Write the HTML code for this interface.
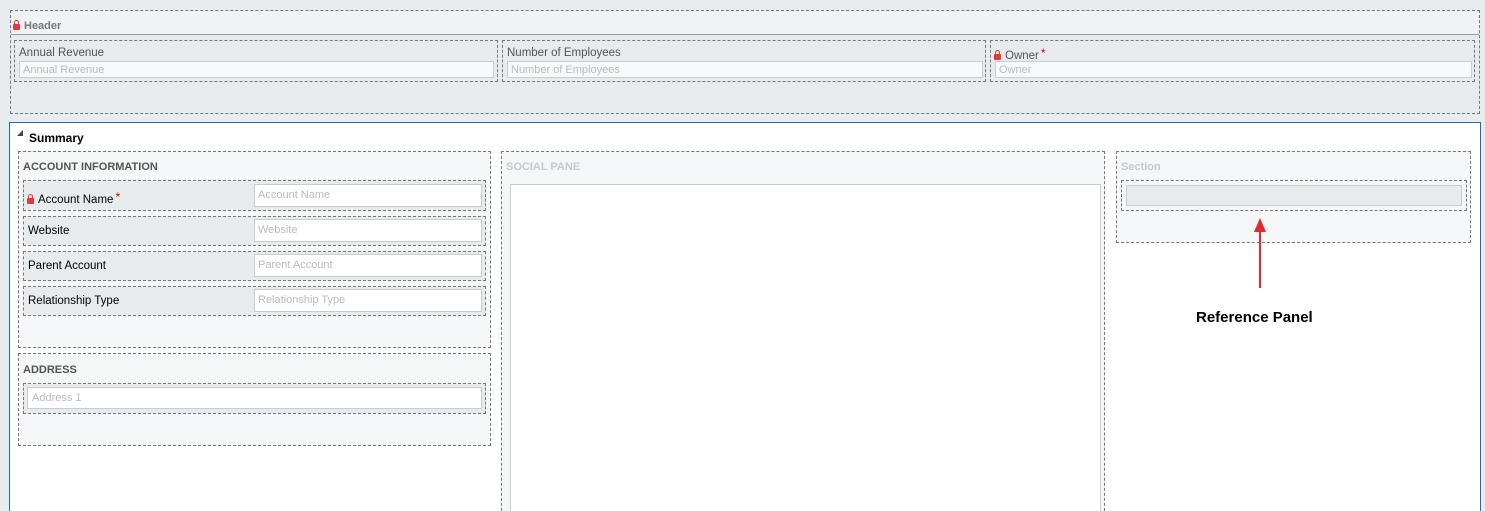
<!DOCTYPE html>
<html style="height:511px;overflow:hidden"><head><style>
*{box-sizing:border-box;margin:0;padding:0}
body{width:1485px;height:511px;overflow:hidden;background:#e9ecef;font-family:"Liberation Sans",sans-serif;font-size:11.5px;color:#333;position:relative}
.a{position:absolute}
.d{position:absolute;border:1px dashed #777}
.in{position:absolute;border:1px solid #ccc;background:#fff;color:#bbb;font-size:11px;padding:3px 3px;line-height:14px}
.lock{display:inline-block;width:7px;height:6px;background:#e8363d;border-radius:1px;position:relative;margin-right:4px;vertical-align:-1px}
.lock:before{content:"";position:absolute;left:1px;top:-4px;width:3px;height:4px;border:1px solid #e8363d;border-bottom:none;border-radius:3px 3px 0 0}
.t{position:absolute;font-size:11px;font-weight:bold;color:#555}
.star{color:#c00;font-size:12px;vertical-align:2px;margin-left:2px}
</style></head><body>
<div class="d" style="left:10px;top:10px;width:1470px;height:104px;background:#e8ebee"></div>
<div class="a" style="left:11px;top:11px;width:1468px;height:24px;background:#f0f2f5;border-bottom:1px solid #999"></div>
<div class="a" style="left:13px;top:20px;color:#777;font-weight:bold;font-size:11px"><span class="lock"></span>Header</div>

<div class="d" style="left:14px;top:40px;width:484px;height:42px"></div>
<div class="a" style="left:19px;top:47px;color:#555">Annual Revenue</div>
<div class="in" style="left:19px;top:61px;width:475px;height:17px;background:#f7f8fa;padding-top:1px">Annual Revenue</div>
<div class="d" style="left:502px;top:40px;width:484px;height:42px"></div>
<div class="a" style="left:507px;top:47px;color:#555">Number of Employees</div>
<div class="in" style="left:507px;top:61px;width:476px;height:17px;background:#f7f8fa;padding-top:1px">Number of Employees</div>
<div class="d" style="left:990px;top:40px;width:485px;height:42px"></div>
<div class="a" style="left:994px;top:46px;color:#555"><span class="lock"></span>Owner<span class="star">*</span></div>
<div class="in" style="left:995px;top:61px;width:477px;height:17px;background:#f7f8fa;padding-top:1px">Owner</div>

<div class="a" style="left:9px;top:122px;width:1472px;height:395px;background:#fff;border:1px solid #1e6ea8"></div>
<div class="a" style="left:17px;top:130px;width:0;height:0;border-left:6px solid transparent;border-bottom:6px solid #444"></div>
<div class="a" style="left:29px;top:131px;font-weight:bold;font-size:12px;color:#000">Summary</div>

<div class="d" style="left:18px;top:151px;width:473px;height:197px;background:#f5f6f8"></div>
<div class="t" style="left:23px;top:161px">ACCOUNT INFORMATION</div>
<div class="d" style="left:23px;top:180px;width:463px;height:31px;background:#e8ebee"></div>
<div class="a" style="left:27px;top:190px;color:#000"><span class="lock"></span>Account Name<span class="star">*</span></div>
<div class="in" style="left:254px;top:184px;width:228px;height:23px">Account Name</div>
<div class="d" style="left:23px;top:216px;width:463px;height:30px;background:#e8ebee"></div>
<div class="a" style="left:28px;top:225px;color:#000">Website</div>
<div class="in" style="left:254px;top:219px;width:228px;height:23px">Website</div>
<div class="d" style="left:23px;top:251px;width:463px;height:30px;background:#e8ebee"></div>
<div class="a" style="left:28px;top:260px;color:#000">Parent Account</div>
<div class="in" style="left:254px;top:254px;width:228px;height:23px">Parent Account</div>
<div class="d" style="left:23px;top:286px;width:463px;height:30px;background:#e8ebee"></div>
<div class="a" style="left:28px;top:295px;color:#000">Relationship Type</div>
<div class="in" style="left:254px;top:289px;width:228px;height:23px">Relationship Type</div>

<div class="d" style="left:18px;top:353px;width:473px;height:93px;background:#f5f6f8"></div>
<div class="t" style="left:23px;top:364px">ADDRESS</div>
<div class="d" style="left:23px;top:383px;width:463px;height:31px;background:#e8ebee"></div>
<div class="in" style="left:27px;top:387px;width:455px;height:22px;padding-left:4px">Address 1</div>

<div class="d" style="left:501px;top:151px;width:604px;height:370px;background:#f5f6f8"></div>
<div class="t" style="left:506px;top:161px;color:#c8c8c8">SOCIAL PANE</div>
<div class="a" style="left:510px;top:184px;width:591px;height:340px;background:#fff;border:1px solid #ccc"></div>

<div class="d" style="left:1116px;top:151px;width:355px;height:92px;background:#f5f6f8"></div>
<div class="t" style="left:1121px;top:161px;color:#c8c8c8">Section</div>
<div class="d" style="left:1121px;top:180px;width:346px;height:31px;background:#f5f6f8"></div>
<div class="a" style="left:1126px;top:185px;width:336px;height:21px;background:#e8ebee;border:1px solid #ccc"></div>

<svg class="a" style="left:1250px;top:215px" width="20" height="75"><line x1="10" y1="12" x2="10" y2="73" stroke="#e8262d" stroke-width="2"/><polygon points="10,3 4,17 16,17" fill="#e8262d"/></svg>
<div class="a" style="left:1196px;top:309px;font-weight:bold;font-size:15px;color:#000">Reference Panel</div>
</body></html>
